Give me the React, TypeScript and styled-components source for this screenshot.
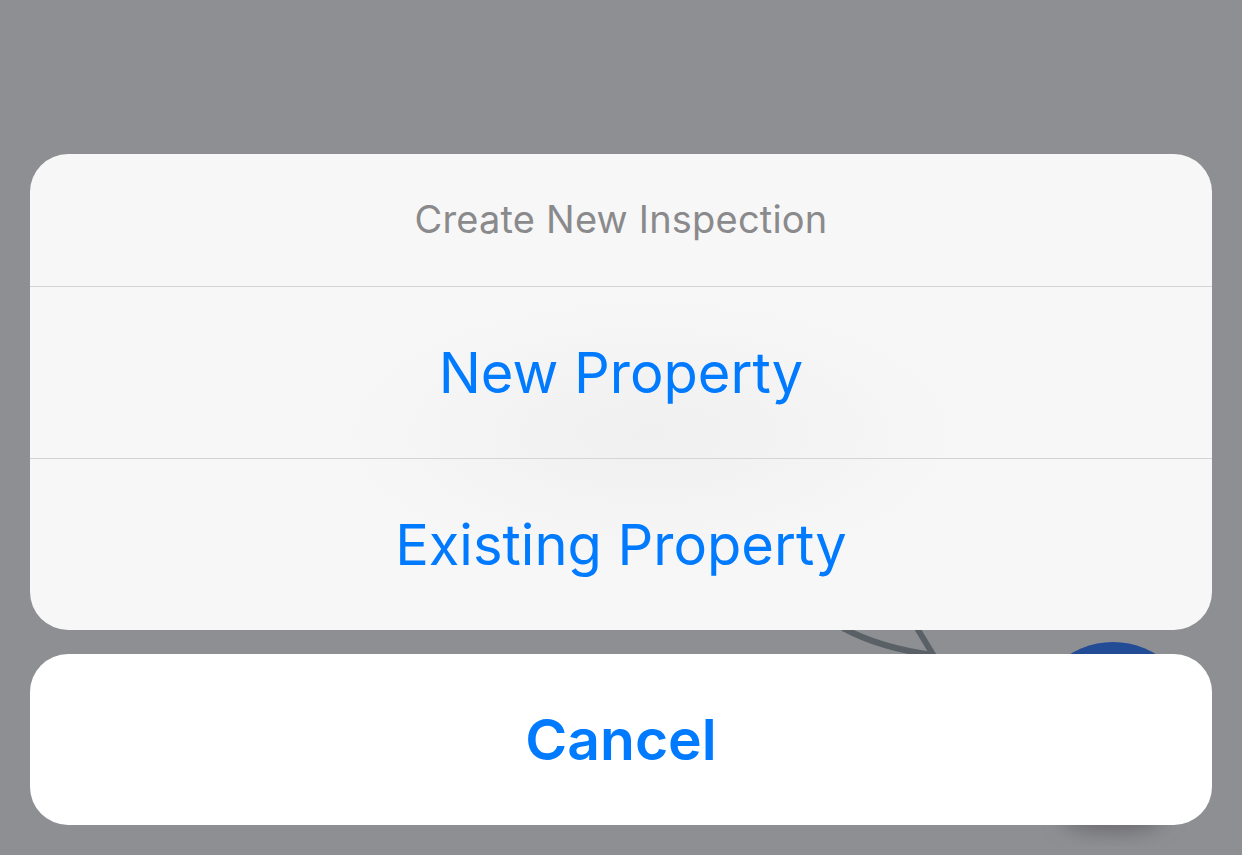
import React from 'react';
import styled, { createGlobalStyle } from 'styled-components';

const GlobalStyle = createGlobalStyle`
  html, body {
    margin: 0;
    padding: 0;
    background-color: #8e8f93;
  }

  body {
    font-family: Inter, 'Noto Sans', 'Liberation Sans', sans-serif;
    -webkit-font-smoothing: antialiased;
  }
`;

const Screen = styled.div`
  position: relative;
  width: 1242px;
  height: 855px;
  overflow: hidden;
  background-color: #8e8f93;
`;

// dimmed app content sitting behind the sheet
const Backdrop = styled.svg`
  position: absolute;
  inset: 0;
  width: 1242px;
  height: 855px;
  pointer-events: none;
`;

const Sheet = styled.div`
  position: relative;
  display: flex;
  flex-direction: column;
  gap: 24px;
  padding: 154px 30px 0;
`;

const Group = styled.div`
  display: flex;
  flex-direction: column;
  border-radius: 38px;
  overflow: hidden;
  background: radial-gradient(
      ellipse 320px 140px at 620px 280px,
      rgba(238, 238, 238, 0.8),
      rgba(247, 247, 247, 0) 100%
    ),
    #f7f7f7;
`;

const Title = styled.div`
  height: 132px;
  display: flex;
  align-items: center;
  justify-content: center;
  font-size: 38px;
  letter-spacing: 0.2px;
  color: #8a8a8c;
  padding-bottom: 2px;
  box-sizing: border-box;
`;

const Action = styled.button<{ $bold?: boolean; $divider?: boolean; $size?: number }>`
  height: ${(p) => p.$size ?? 171}px;
  box-sizing: border-box;
  border: none;
  background: transparent;
  border-top: ${(p) => (p.$divider ? '1.5px solid #d4d4d6' : 'none')};
  font-family: inherit;
  font-size: ${(p) => (p.$bold ? 57 : 56)}px;
  font-weight: ${(p) => (p.$bold ? 600 : 400)};
  color: #007aff;
  cursor: pointer;
  padding: 0;
`;

const CancelCard = styled.div`
  display: flex;
  flex-direction: column;
  border-radius: 38px;
  overflow: hidden;
  background-color: #ffffff;
`;

export default function App() {
  return (
    <Screen>
      <GlobalStyle />
      <Backdrop viewBox="0 0 1242 855">
        <defs>
          <filter id="fabShadow" x="-50%" y="-50%" width="200%" height="200%">
            <feGaussianBlur stdDeviation="10" />
          </filter>
        </defs>
        <path
          d="M843 628 Q 880 648 933 655"
          stroke="#596066"
          strokeWidth="6"
          fill="none"
        />
        <path d="M917 628 L 935 658" stroke="#596066" strokeWidth="6" fill="none" />
        <ellipse cx="1113" cy="818" rx="52" ry="14" fill="#6a6b6f" filter="url(#fabShadow)" />
        <circle cx="1113" cy="724" r="82" fill="#234c97" />
      </Backdrop>
      <Sheet>
        <Group>
          <Title>Create New Inspection</Title>
          <Action $divider $size={172}>New Property</Action>
          <Action $divider $size={172}>Existing Property</Action>
        </Group>
        <CancelCard>
          <Action $bold>Cancel</Action>
        </CancelCard>
      </Sheet>
    </Screen>
  );
}
